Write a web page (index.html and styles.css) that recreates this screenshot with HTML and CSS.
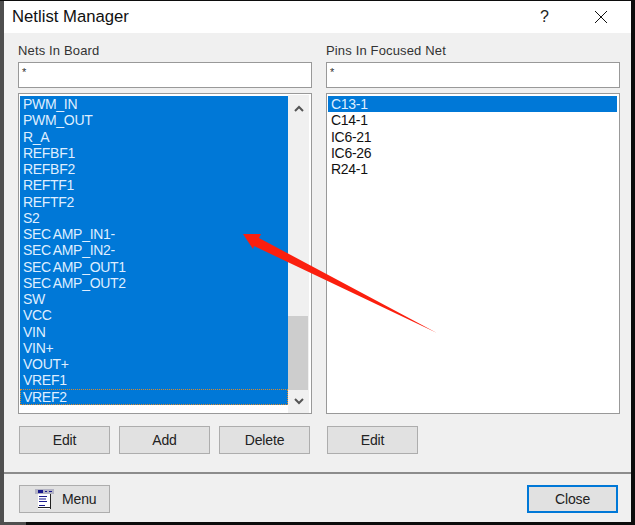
FILE: index.html
```html
<!DOCTYPE html>
<html lang="en">
<head>
<meta charset="utf-8">
<title>Netlist Manager</title>
<link rel="stylesheet" href="styles.css">
</head>
<body>
<div class="window">
  <header class="titlebar">
    <span class="title">Netlist Manager</span>
    <span class="help">?</span>
    <svg class="close-x" width="14" height="14" viewBox="0 0 14 14"><path d="M1 1l12 12M13 1L1 13" stroke="#111" stroke-width="1" fill="none"/></svg>
  </header>
  <main class="content">
    <section class="pane">
      <label class="pane-label">Nets In Board</label>
      <div class="filter">*</div>
      <div class="list">
        <ul class="items items-all">
          <li>PWM_IN</li><li>PWM_OUT</li><li>R_A</li><li>REFBF1</li><li>REFBF2</li><li>REFTF1</li><li>REFTF2</li><li>S2</li><li>SEC AMP_IN1-</li><li>SEC AMP_IN2-</li><li>SEC AMP_OUT1</li><li>SEC AMP_OUT2</li><li>SW</li><li>VCC</li><li>VIN</li><li>VIN+</li><li>VOUT+</li><li>VREF1</li><li class="focused">VREF2</li>
        </ul>
        <div class="scrollbar">
          <svg class="chev chev-up" width="10" height="7" viewBox="0 0 10 7"><path d="M1 6l4-4 4 4" stroke="#555" stroke-width="2" fill="none"/></svg>
          <div class="track"><div class="thumb"></div></div>
          <svg class="chev chev-down" width="10" height="7" viewBox="0 0 10 7"><path d="M1 1l4 4 4-4" stroke="#555" stroke-width="2" fill="none"/></svg>
        </div>
      </div>
      <div class="actions">
        <button class="btn">Edit</button>
        <button class="btn">Add</button>
        <button class="btn">Delete</button>
      </div>
    </section>
    <section class="pane">
      <label class="pane-label">Pins In Focused Net</label>
      <div class="filter">*</div>
      <div class="list">
        <ul class="items">
          <li class="selected">C13-1</li><li>C14-1</li><li>IC6-21</li><li>IC6-26</li><li>R24-1</li>
        </ul>
      </div>
      <div class="actions">
        <button class="btn">Edit</button>
      </div>
    </section>
  </main>
  <footer class="footer">
    <button class="btn btn-menu">
      <svg width="20" height="20" viewBox="0 0 20 20">
        <rect x="0" y="0" width="19" height="5" fill="#b4b4c4"/>
        <rect x="3" y="1" width="5" height="3" fill="#1a1a8c"/>
        <rect x="10" y="2" width="2" height="1" fill="#1a1a8c"/>
        <rect x="14" y="2" width="3" height="1" fill="#1a1a8c"/>
        <rect x="3" y="5" width="12" height="15" fill="#fff"/>
        <path d="M15.500 5v15M3 18.500h13" stroke="#222" fill="none"/>
        <path d="M4 7.500h8M4 10h7M4 12.500h8M4 16.500h6" stroke="#1a1a8c" stroke-width="1.200" fill="none"/>
      </svg>
      <span>Menu</span>
    </button>
    <button class="btn btn-default">Close</button>
  </footer>
</div>
<svg class="arrow" width="635" height="525" viewBox="0 0 635 525"><path d="M243 234L261 234L259 238L437 333L254 246L253 249Z" fill="#fb1f0e"/></svg>
</body>
</html>
```
FILE: styles.css
```css
* { box-sizing: border-box; }
html, body { margin: 0; padding: 0; }
body {
  width: 635px;
  height: 525px;
  overflow: hidden;
  position: relative;
  font-family: "Liberation Sans", Arial, sans-serif;
  font-size: 14px;
  color: #1a1a1a;
  background:
    linear-gradient(#4f4f4f, #4f4f4f) left 1px / 4px 100% no-repeat,
    linear-gradient(#4f4f4f, #4f4f4f) left bottom / 26px 3px no-repeat,
    #0c0c0c;
}
.window { margin: 1px 4px 0 4px; width: 627px; height: 521px; background: #f0f0f0; display: flex; flex-direction: column; }
.titlebar { height: 32px; background: #fff; display: flex; align-items: center; padding: 0 23px 0 8px; flex: none; }
.title { font-size: 16.700px; color: #111; flex: 1; }
.help { font-size: 16px; color: #222; margin-right: 45px; }
.close-x { display: block; }
.content { height: 441px; display: flex; gap: 14px; padding: 10px 11px 0 14px; flex: none; border-bottom: 2px solid #8c8c8c; }
.pane { width: 294px; display: flex; flex-direction: column; }
.pane-label { font-size: 13px; letter-spacing: 0.150px; line-height: 16px; color: #333; height: 19px; }
.filter { height: 26px; background: #fff; border: 1px solid #999; font-size: 11px; padding: 2px 3px; line-height: 14px; color: #333; }
.list { margin-top: 5px; height: 321px; background: #fff; border: 1px solid #999; padding: 2px 2px 0 1px; display: flex; }
.items { list-style: none; margin: 0; padding: 0; flex: 1; }
.items li { height: 16.260px; line-height: 16px; padding-left: 3px; font-size: 14px; letter-spacing: -0.300px; word-spacing: -1px; color: #111; }
.items-all li, .items li.selected { background: #0078d7; color: #dfeeff; }
.items li.focused { border: 1px dotted #d98a2e; padding-left: 2px; line-height: 14px; }
.scrollbar { width: 21px; margin-top: -1px; background: #f0f0f0; display: flex; flex-direction: column; align-items: center; }
.chev { display: block; flex: none; }
.chev-up { margin: 10px 0 6px; }
.chev-down { margin: 8px 0; }
.track { flex: 1; width: 100%; display: flex; flex-direction: column; justify-content: flex-end; padding: 0 1px 0 0; }
.thumb { height: 74px; background: #cdcdcd; }
.actions { display: flex; gap: 9px; margin-top: 12px; padding-left: 1px; }
.btn { width: 91px; height: 28px; background: #e1e1e1; border: 1px solid #adadad; font-family: inherit; font-size: 14px; letter-spacing: -0.150px; color: #222; padding: 0; }
.footer { flex: 1; display: flex; justify-content: space-between; padding: 11px 13px 0 15px; }
.btn-menu { display: flex; align-items: center; justify-content: flex-start; gap: 7px; padding-left: 15px; }
.btn-default { border: 2px solid #0078d7; }
.arrow { position: absolute; left: 0; top: 0; pointer-events: none; }
```
